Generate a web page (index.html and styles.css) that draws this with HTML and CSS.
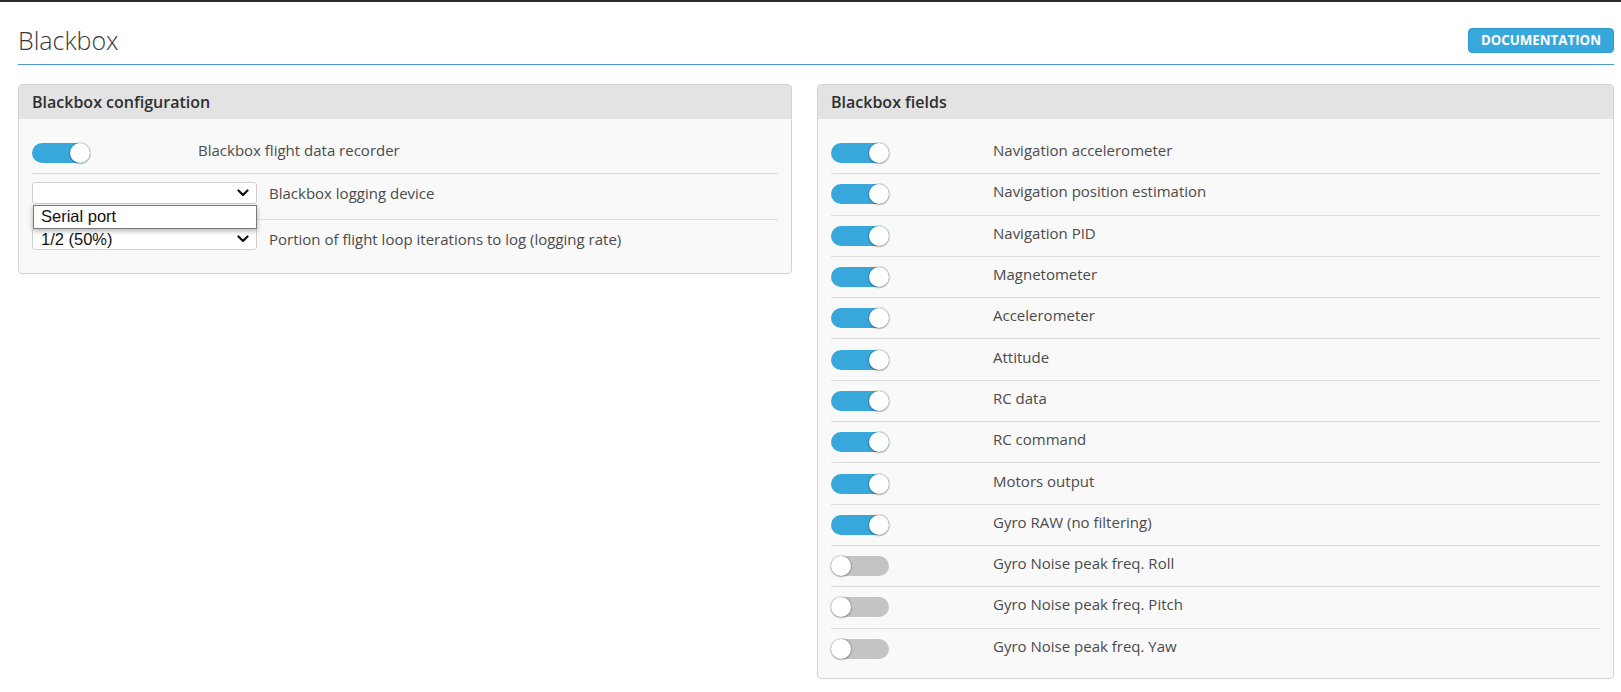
FILE: index.html
```html
<!DOCTYPE html>
<html lang="en">
<head>
<meta charset="utf-8">
<title>Blackbox</title>
<link rel="stylesheet" href="styles.css">
</head>
<body>
<div class="page">
  <div class="tab-header">
    <h1 class="tab-title">Blackbox</h1>
    <a class="doc-btn" href="#">DOCUMENTATION</a>
  </div>

  <div class="columns">
    <section class="panel">
      <div class="panel-head">Blackbox configuration</div>
      <div class="panel-body">
        <div class="row">
          <div class="ctl"><span class="switch on"><span class="knob"></span></span></div>
          <div class="label">Blackbox flight data recorder</div>
        </div>
        <div class="row select-row">
          <div class="select-wrap">
            <div class="select">
              <span class="select-text"></span>
              <svg class="chev" width="12" height="8" viewBox="0 0 12 8"><path d="M1.5 1.5 L6 6 L10.5 1.5" fill="none" stroke="#111" stroke-width="2.2" stroke-linecap="round" stroke-linejoin="round"/></svg>
            </div>
            <div class="dropdown"><div class="option">Serial port</div></div>
          </div>
          <div class="label">Blackbox logging device</div>
        </div>
        <div class="row select-row last">
          <div class="select-wrap">
            <div class="select">
              <span class="select-text">1/2 (50%)</span>
              <svg class="chev" width="12" height="8" viewBox="0 0 12 8"><path d="M1.5 1.5 L6 6 L10.5 1.5" fill="none" stroke="#111" stroke-width="2.2" stroke-linecap="round" stroke-linejoin="round"/></svg>
            </div>
          </div>
          <div class="label">Portion of flight loop iterations to log (logging rate)</div>
        </div>
      </div>
    </section>

    <section class="panel">
      <div class="panel-head">Blackbox fields</div>
      <div class="panel-body fields">
        <div class="row"><div class="ctl wide"><span class="switch on"><span class="knob"></span></span></div><div class="label">Navigation accelerometer</div></div>
        <div class="row"><div class="ctl wide"><span class="switch on"><span class="knob"></span></span></div><div class="label">Navigation position estimation</div></div>
        <div class="row"><div class="ctl wide"><span class="switch on"><span class="knob"></span></span></div><div class="label">Navigation PID</div></div>
        <div class="row"><div class="ctl wide"><span class="switch on"><span class="knob"></span></span></div><div class="label">Magnetometer</div></div>
        <div class="row"><div class="ctl wide"><span class="switch on"><span class="knob"></span></span></div><div class="label">Accelerometer</div></div>
        <div class="row"><div class="ctl wide"><span class="switch on"><span class="knob"></span></span></div><div class="label">Attitude</div></div>
        <div class="row"><div class="ctl wide"><span class="switch on"><span class="knob"></span></span></div><div class="label">RC data</div></div>
        <div class="row"><div class="ctl wide"><span class="switch on"><span class="knob"></span></span></div><div class="label">RC command</div></div>
        <div class="row"><div class="ctl wide"><span class="switch on"><span class="knob"></span></span></div><div class="label">Motors output</div></div>
        <div class="row"><div class="ctl wide"><span class="switch on"><span class="knob"></span></span></div><div class="label">Gyro RAW (no filtering)</div></div>
        <div class="row"><div class="ctl wide"><span class="switch"><span class="knob"></span></span></div><div class="label">Gyro Noise peak freq. Roll</div></div>
        <div class="row"><div class="ctl wide"><span class="switch"><span class="knob"></span></span></div><div class="label">Gyro Noise peak freq. Pitch</div></div>
        <div class="row last"><div class="ctl wide"><span class="switch"><span class="knob"></span></span></div><div class="label">Gyro Noise peak freq. Yaw</div></div>
      </div>
    </section>
  </div>
</div>
</body>
</html>
```

FILE: styles.css
```css
* { box-sizing: border-box; }

html, body {
  margin: 0;
  padding: 0;
  background: #ffffff;
}

body {
  border-top: 2px solid #2a2a2a;
  font-family: "Open Sans", "DejaVu Sans", sans-serif;
  color: #4a4a4a;
  font-size: 15px;
}

.page {
  padding: 0 7px 0 18px;
}

.tab-header {
  display: flex;
  align-items: center;
  justify-content: space-between;
  height: 63px;
  border-bottom: 1px solid #4c9cc8;
  padding-top: 15px;
}

.tab-title {
  margin: 0;
  font-weight: 300;
  font-size: 25px;
  color: #3a3a3a;
  line-height: 1;
}

.doc-btn {
  display: inline-block;
  background: #37a8db;
  color: #ffffff;
  font-weight: 700;
  font-size: 13.3px;
  text-decoration: none;
  height: 25px;
  line-height: 23px;
  padding: 0 12px;
  border-radius: 4px;
  border: 1px solid #3399cc;
}

.columns {
  display: grid;
  grid-template-columns: 774fr 797fr;
  column-gap: 25px;
  align-items: start;
  margin-top: 19px;
}

.panel {
  background: #f9f9f9;
  border: 1px solid #d2d2d2;
  border-radius: 4px;
}

.panel-head {
  background: #e3e3e3;
  height: 34px;
  line-height: 34px;
  padding-left: 13px;
  font-weight: 600;
  font-size: 16px;
  color: #2f2f2f;
  border-radius: 4px 4px 0 0;
}

.panel-body {
  padding: 14px 13px 9.5px;
}

.row {
  display: flex;
  align-items: center;
  min-height: 41.3px;
  border-bottom: 1px solid #dddddd;
}

.row.last {
  border-bottom: none;
  min-height: 40px;
}

.ctl {
  width: 166px;
  flex: none;
}

.ctl.wide {
  width: 162px;
}

.label {
  font-size: 15px;
  color: #4b4b4b;
  line-height: 20px;
  margin-bottom: 6px;
}

.switch {
  display: flex;
  justify-content: flex-start;
  width: 58px;
  height: 20px;
  border-radius: 10px;
  background: #c4c4c4;
}

.switch.on {
  justify-content: flex-end;
  background: #37a7dc;
}

.knob {
  width: 20px;
  height: 20px;
  border-radius: 50%;
  background: #ffffff;
  box-shadow: 0 0 0 1px rgba(0, 0, 0, 0.12), 0 1px 2px rgba(0, 0, 0, 0.25);
}

.select-row {
  padding: 8px 0 15px;
  min-height: 0;
}

.select-row .label {
  margin-bottom: 0;
}

.select-row.last {
  padding-bottom: 13px;
  min-height: 0;
}

.select-wrap {
  position: relative;
  width: 225px;
  flex: none;
  margin-right: 12px;
}

.select {
  display: flex;
  align-items: center;
  justify-content: space-between;
  height: 22px;
  background: #ffffff;
  border: 1px solid #cfcfcf;
  border-radius: 3px;
  padding: 0 7px 0 8px;
  font-family: "Liberation Sans", Arial, sans-serif;
  font-size: 16.5px;
  color: #111111;
}

.select-text {
  line-height: 20px;
}

.chev {
  display: block;
}

.dropdown {
  position: absolute;
  top: 23px;
  left: 1px;
  right: 0;
  height: 24px;
  background: #ffffff;
  border: 1px solid #7a7a7a;
  box-shadow: 0 2px 5px rgba(0, 0, 0, 0.3);
  z-index: 5;
}

.option {
  font-family: "Liberation Sans", Arial, sans-serif;
  font-size: 16.5px;
  color: #111111;
  padding-left: 7px;
  line-height: 21px;
}
```
